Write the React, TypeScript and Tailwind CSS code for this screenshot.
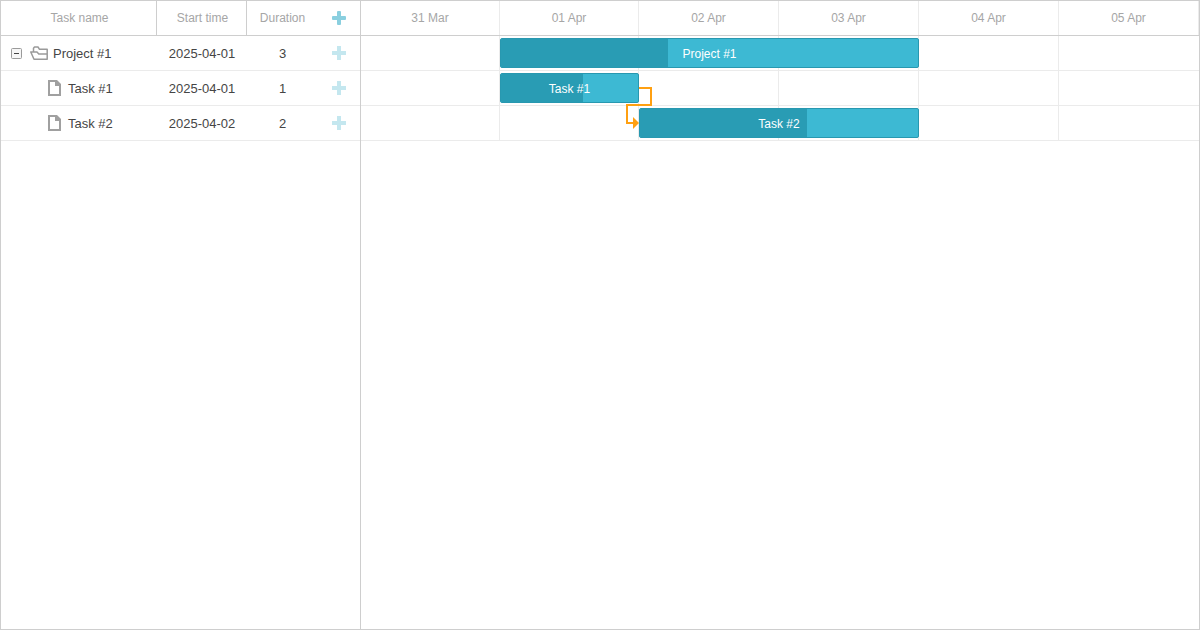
import { useState } from 'react';

type Task = {
  id: number;
  name: string;
  start: string;
  duration: number;
  progress: number;
  span: string;
  parent?: number;
  linkedFrom?: number;
};

const days = [
  { label: '31 Mar', cell: 'col-start-1 border-r' },
  { label: '01 Apr', cell: 'col-start-2 border-r' },
  { label: '02 Apr', cell: 'col-start-3 border-r' },
  { label: '03 Apr', cell: 'col-start-4 border-r' },
  { label: '04 Apr', cell: 'col-start-5 border-r' },
  { label: '05 Apr', cell: 'col-start-6' },
];

const tasks: Task[] = [
  { id: 1, name: 'Project #1', start: '2025-04-01', duration: 3, progress: 40, span: 'col-start-2 col-end-5' },
  { id: 2, name: 'Task #1', start: '2025-04-01', duration: 1, progress: 60, span: 'col-start-2 col-end-3', parent: 1 },
  { id: 3, name: 'Task #2', start: '2025-04-02', duration: 2, progress: 60, span: 'col-start-3 col-end-5', parent: 1, linkedFrom: 2 },
];

const scale = 'grid grid-cols-[139fr_139fr_140fr_140fr_140fr_140fr]';

const ToggleIcon = ({ open }: { open: boolean }) => (
  <svg width="11" height="11" viewBox="0 0 11 11">
    <rect x="0.5" y="0.5" width="10" height="10" rx="1" fill="#f6f6f6" stroke="#9a9a9a" />
    <path d={open ? 'M3 5.5h5' : 'M3 5.5h5M5.5 3v5'} stroke="#444" />
  </svg>
);

const FolderIcon = () => (
  <svg width="18" height="14" viewBox="0 0 18 14" fill="none" stroke="#9a9a9a" strokeWidth="1.5" strokeLinejoin="round">
    <path d="M3.5 6V2.2L4.5 1H8l1.5 2.3h7.7v9.9H4L.8 6H7l1.8 2h8.4" />
  </svg>
);

const FileIcon = () => (
  <svg width="13" height="16" viewBox="0 0 13 16" fill="#a0a0a0">
    <path fillRule="evenodd" d="M0 0h9l4 4v12H0ZM2 2v12h9V6H7V2Z" />
  </svg>
);

const PlusIcon = ({ rounded }: { rounded?: boolean }) => (
  <svg width="14" height="14" viewBox="0 0 14 14" fill="currentColor">
    <rect x="5" width="4" height="14" rx={rounded ? 1 : 0} />
    <rect y="5" width="14" height="4" rx={rounded ? 1 : 0} />
  </svg>
);

const LinkArrow = () => (
  <svg className="absolute -left-[13px] -top-[19px] z-10" width="26" height="42" viewBox="0 0 26 42">
    <path d="M13 1h12v17H1v18h6" fill="none" stroke="#ffa011" strokeWidth="2" />
    <path d="M7 30l6 6-6 6Z" fill="#ffa011" />
  </svg>
);

const Bar = ({ task }: { task: Task }) => (
  <div className={`${task.span} relative row-start-1 py-[2px]`}>
    <div className="relative flex h-[30px] items-center justify-center overflow-hidden rounded-[2px] border border-[#2898b0] bg-[#3db9d3] text-xs text-white">
      <div className="absolute inset-y-0 left-0 bg-[#299cb4]" style={{ width: `${task.progress}%` }} />
      <span className="relative pt-[2px]">{task.name}</span>
    </div>
    {task.linkedFrom && <LinkArrow />}
  </div>
);

const App = () => {
  const [open, setOpen] = useState(true);
  const visible = tasks.filter((t) => open || !t.parent);

  return (
    <main className="flex min-h-screen border border-[#cecece] bg-white font-['Liberation_Sans',Arial,sans-serif] text-[13px] text-[#454545]">
      <section className="w-[360px] shrink-0 border-r border-[#cecece]">
        <table className="w-full table-fixed border-separate border-spacing-0">
          <colgroup>
            <col className="w-[156px]" />
            <col className="w-[90px]" />
            <col className="w-[71px]" />
            <col />
          </colgroup>
          <thead className="text-xs text-[#a6a6a6]">
            <tr className="h-[35px]">
              <th className="border-r border-b border-[#cecece] p-0 pl-[2px] text-center font-normal">Task name</th>
              <th className="border-r border-b border-[#cecece] p-0 pl-[2px] text-center font-normal">Start time</th>
              <th className="border-b border-[#cecece] p-0 text-center font-normal">Duration</th>
              <th className="border-b border-[#cecece] p-0">
                <button aria-label="Add task" className="mx-auto block text-[#8acfdf]">
                  <PlusIcon rounded />
                </button>
              </th>
            </tr>
          </thead>
          <tbody>
            {visible.map((t) => (
              <tr key={t.id} className="h-[35px]">
                <td className="border-b border-[#ebebeb] p-0">
                  {t.parent ? (
                    <div className="flex items-center gap-[7px] pl-[47px]">
                      <FileIcon />
                      <span className="pt-[2px]">{t.name}</span>
                    </div>
                  ) : (
                    <div className="flex items-center pl-[10px]">
                      <button aria-label="Toggle project" aria-expanded={open} onClick={() => setOpen(!open)}>
                        <ToggleIcon open={open} />
                      </button>
                      <span className="pr-[5px] pl-2">
                        <FolderIcon />
                      </span>
                      <span className="pt-[2px]">{t.name}</span>
                    </div>
                  )}
                </td>
                <td className="border-b border-[#ebebeb] p-0 pt-[2px] text-center">{t.start}</td>
                <td className="border-b border-[#ebebeb] p-0 pt-[2px] text-center">{t.duration}</td>
                <td className="border-b border-[#ebebeb] p-0">
                  <button aria-label={`Add subtask to ${t.name}`} className="mx-auto block text-[#c4e7ef]">
                    <PlusIcon />
                  </button>
                </td>
              </tr>
            ))}
          </tbody>
        </table>
      </section>

      <section className="min-w-0 flex-1">
        <div className={`${scale} h-[35px] border-b border-[#cecece] text-xs text-[#a6a6a6]`}>
          {days.map((d) => (
            <div key={d.label} className="flex items-center justify-center border-r border-[#ebebeb]">
              {d.label}
            </div>
          ))}
        </div>
        {visible.map((t) => (
          <div key={t.id} className={`${scale} h-[35px] grid-rows-[34px] border-b border-[#ebebeb]`}>
            {days.map((d) => (
              <div key={d.label} className={`${d.cell} row-start-1 border-[#ebebeb]`} />
            ))}
            <Bar task={t} />
          </div>
        ))}
      </section>
    </main>
  );
};

export default App;
